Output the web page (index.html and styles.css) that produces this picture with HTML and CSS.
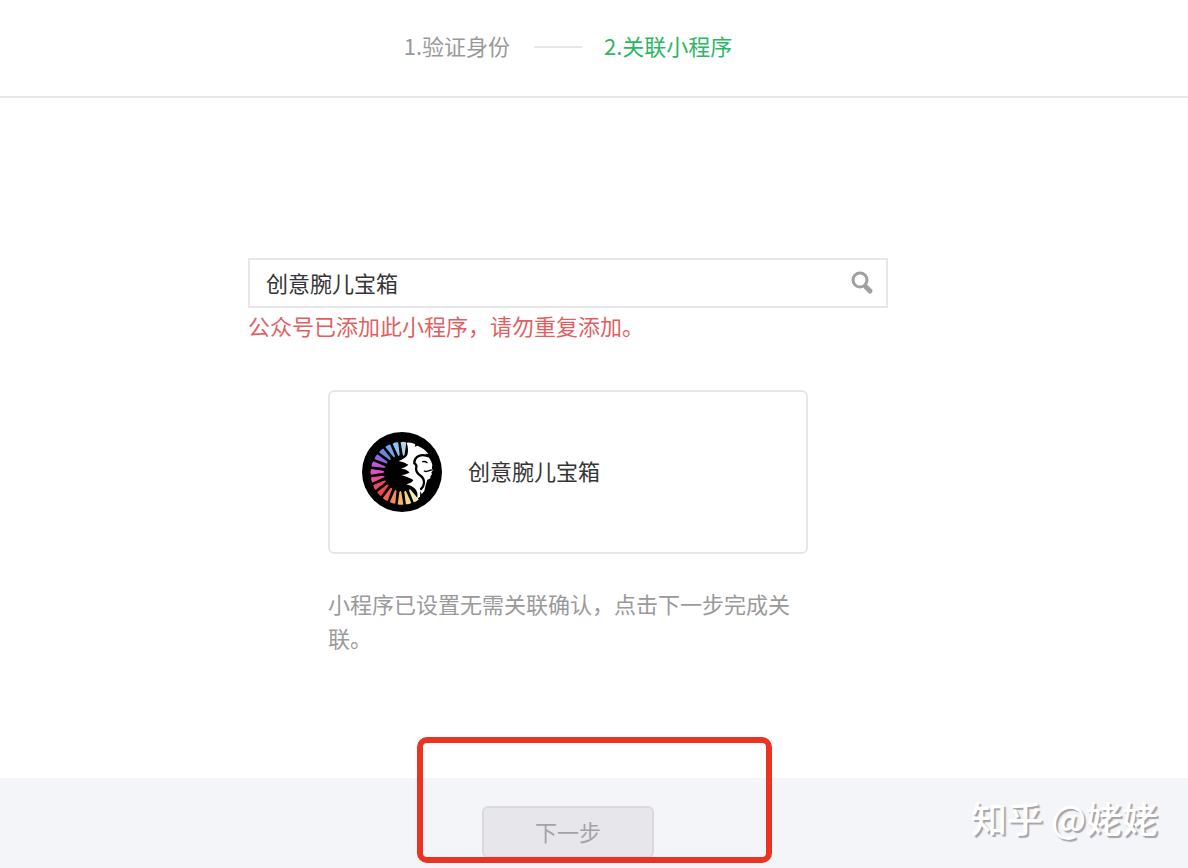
FILE: index.html
```
<!DOCTYPE html>
<html lang="zh-CN">
  <head>
    <meta charset="utf-8" />
    <meta name="viewport" content="width=device-width, initial-scale=1" />
    <title>关联小程序</title>
    <link rel="stylesheet" href="styles.css">
  </head>

  <body>
    <header class="header">
      <ol class="steps">
        <li class="step">1.验证身份</li>
        <li class="step step-current" aria-current="step">2.关联小程序</li>
      </ol>
    </header>

    <main class="main">
      <form class="search" id="link-form">
        <div class="search-box">
          <input class="search-input" type="text" aria-label="搜索小程序" value="创意腕儿宝箱" />
          <button class="search-button" type="button" aria-label="搜索">
            <svg class="search-icon" viewBox="0 0 24 24" fill="none" stroke="#a0a0a0">
              <circle cx="10" cy="9" r="7" stroke-width="3" />
              <path d="M16 16L20 20" stroke-width="5" stroke-linecap="round" />
            </svg>
          </button>
        </div>
        <p class="error">公众号已添加此小程序，请勿重复添加。</p>
      </form>

      <section class="result">
        <div class="card">
          <svg class="avatar" viewBox="30 30 240 240" aria-hidden="true">
            <defs>
              <path id="ray" d="M141 61 Q150 58 158 61 L155 97 Q151 105 149 97 Z" />
            </defs>
            <circle cx="150" cy="150" r="120" fill="#000" />
            <!-- coloured mane, rotated round the head -->
            <use href="#ray" fill="#a9d7f2" transform="rotate(3 150 154)" />
            <use href="#ray" fill="#8fc3ee" transform="rotate(-12 150 154)" />
            <use href="#ray" fill="#70a5e6" transform="rotate(-27 150 154)" />
            <use href="#ray" fill="#6f86e0" transform="rotate(-42 150 154)" />
            <use href="#ray" fill="#9168dc" transform="rotate(-57 150 154)" />
            <use href="#ray" fill="#bd58d8" transform="rotate(-72 150 154)" />
            <use href="#ray" fill="#dc50c4" transform="rotate(-87 150 154)" />
            <use href="#ray" fill="#e94d94" transform="rotate(-102 150 154)" />
            <use href="#ray" fill="#e94861" transform="rotate(-117 150 154)" />
            <use href="#ray" fill="#ed4646" transform="rotate(-132 150 154)" />
            <use href="#ray" fill="#f0634c" transform="rotate(-147 150 154)" />
            <use href="#ray" fill="#f28b58" transform="rotate(-162 150 154)" />
            <use href="#ray" fill="#f5b466" transform="rotate(-177 150 154)" />
            <use href="#ray" fill="#f6d57e" transform="rotate(-192 150 154)" />
            <use href="#ray" fill="#f9eab0" transform="rotate(-207 150 154)" />
            <!-- face and light side of the mane -->
            <path fill="#fff" d="M164 62 Q178 60 190 67 L188 74 L197 71 Q218 80 229 96 L219 95 Q237 109 241 129 Q238 138 242 146 L238 151 Q242 158 235 163 Q238 171 226 173 Q221 187 217 207 L209 216 L205 207 L204 224 L195 231 Q200 209 187 198 Q178 190 163 187 Q181 182 184 174 Q172 166 148 159 Q166 158 173 151 Q164 142 147 139 Q164 135 169 128 Q158 121 140 117 Q160 110 166 99 Q171 82 164 62 Z" />
            <path fill="none" stroke="#000" stroke-width="7" stroke-linecap="round" stroke-linejoin="round" d="M226 102 Q207 96 195 105 Q186 113 187 124 Q196 129 192 140 Q193 153 204 160 Q217 169 216 183 Q215 194 207 201" />
            <path fill="none" stroke="#000" stroke-width="4" stroke-linecap="round" d="M212 119 Q220 117 225 122 M238 144 L227 147 Q222 150 217 147" />
          </svg>
          <span class="card-name">创意腕儿宝箱</span>
        </div>
        <p class="hint">小程序已设置无需关联确认，点击下一步完成关联。</p>
      </section>
    </main>

    <footer class="footer">
      <button class="next" type="submit" form="link-form" disabled>下一步</button>
      <div class="marker"></div>
      <div class="watermark">知乎 @姥姥</div>
    </footer>
  </body>
</html>
```

FILE: styles.css
```
* {
  box-sizing: border-box;
}
body {
  display: flex;
  flex-direction: column;
  min-height: 100vh;
  margin: 0;
  background: #fff;
  color: #353535;
  font-family: "Noto Sans CJK SC", sans-serif;
  font-size: 22px;
  line-height: 34px;
}
p {
  margin: 0;
}
.header {
  padding: 28px 52px 34px 0;
  border-bottom: 2px solid #e7e7eb;
}
.steps {
  display: flex;
  justify-content: center;
  margin: 0;
  padding: 0;
  list-style: none;
}
.step {
  display: flex;
  align-items: center;
  color: #9a9a9a;
}
.step-current {
  color: #2bb765;
}
/* line between two steps */
.step + .step::before {
  content: "";
  width: 48px;
  height: 2px;
  margin: 4px 22px 0 24px;
  background: #e7e7eb;
}
.main {
  flex: 1;
  padding: 160px 52px 124px 0;
}
.search {
  max-width: 640px;
  margin: 0 auto;
}
.search-box {
  display: flex;
  align-items: center;
  height: 50px;
  border: 2px solid #e7e7eb;
}
.search-input {
  flex: 1;
  min-width: 0;
  height: 46px;
  padding: 0 16px 2px;
  border: 0;
  outline: 0;
  background: none;
  color: inherit;
  font: inherit;
}
.search-button {
  display: flex;
  padding: 0 12px;
  border: 0;
  background: none;
}
.search-icon {
  width: 24px;
  height: 24px;
}
.error {
  color: #e15f63;
}
.result {
  max-width: 480px;
  margin: 48px auto 0;
}
.card {
  display: flex;
  align-items: center;
  gap: 26px;
  padding: 40px 32px;
  border: 2px solid #e7e7eb;
  border-radius: 6px;
}
.avatar {
  width: 80px;
  height: 80px;
}
.card-name {
  padding-bottom: 4px;
}
.hint {
  margin-top: 32px;
  color: #9a9a9a;
}
.footer {
  position: relative;
  display: flex;
  justify-content: center;
  padding: 28px 52px 10px 0;
  background: #f4f5f9;
}
.next {
  width: 172px;
  height: 52px;
  padding: 0 0 2px;
  border: 2px solid #dadade;
  border-radius: 6px;
  background: #e7e7eb;
  color: #a3a3a7;
  font: inherit;
}
.marker {
  position: absolute;
  top: -41px;
  left: 50%;
  width: 355px;
  height: 126px;
  margin-left: -177px;
  border: 6px solid #ea3323;
  border-radius: 10px;
}
.watermark {
  position: absolute;
  top: 14px;
  right: 30px;
  color: #fff;
  font-size: 36px;
  font-weight: 500;
  line-height: 50px;
  text-shadow: 2px 2px 1px #a5a5a9;
}
```
